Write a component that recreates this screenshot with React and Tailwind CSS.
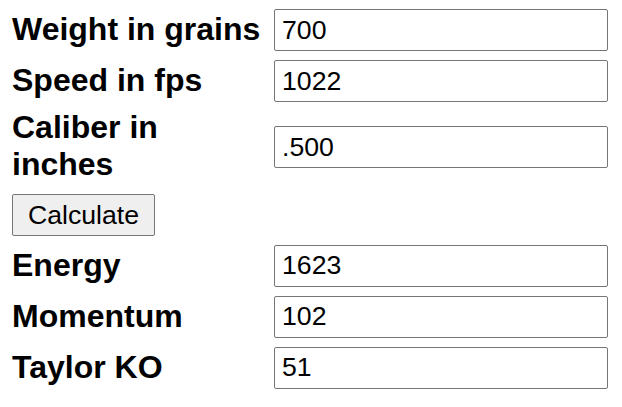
const inputCls =
  "my-[2px] h-[42px] w-[334px] rounded-[2px] border border-[#767676] bg-white pl-[7px] text-[26.67px] text-black outline-none";
const labelCls = "text-[32px] font-bold leading-[37.3px] text-black";

function Row({ label, value, extra = "" }) {
  return (
    <>
      <div className={`${labelCls} ${extra}`}>{label}</div>
      <input className={inputCls} defaultValue={value} readOnly />
    </>
  );
}

export default function App() {
  return (
    <div
      className="min-h-[407px] bg-white pl-[12px] pt-[7px]"
      style={{ fontFamily: '"Liberation Sans", Arial, sans-serif' }}
    >
      <div className="grid grid-cols-[262px_334px] items-center gap-y-[5px]">
        <Row label="Weight in grains" value="700" />
        <Row label="Speed in fps" value="1022" />
        <Row
          label={
            <>
              Caliber in
              <br />
              inches
            </>
          }
          value=".500"
          extra="pb-[2px]"
        />
      </div>

      <button className="mt-[8px] flex h-[42px] w-[143px] items-center justify-center rounded-[2px] border border-[#767676] bg-[#efefef] text-[26.67px] text-black">
        Calculate
      </button>

      <div className="mt-[7px] grid grid-cols-[262px_334px] items-center gap-y-[5px]">
        <Row label="Energy" value="1623" />
        <Row label="Momentum" value="102" />
        <Row label="Taylor KO" value="51" />
      </div>
    </div>
  );
}
